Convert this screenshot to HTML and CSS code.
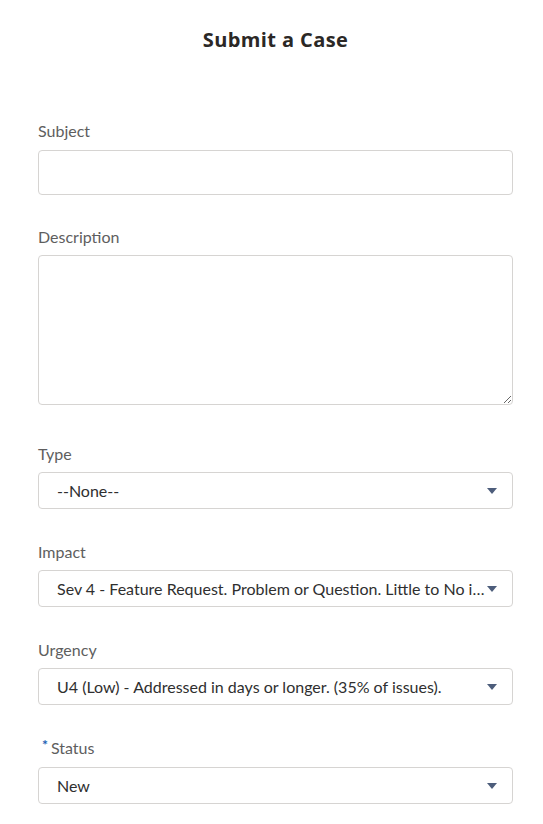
FILE: index.html
```html
<!DOCTYPE html>
<html lang="en">
<head>
<meta charset="utf-8">
<title>Submit a Case</title>
<link rel="stylesheet" href="styles.css">
</head>
<body>
<div class="page">
  <h1 class="title">Submit a Case</h1>
  <form class="form">
    <div class="field">
      <label class="label">Subject</label>
      <input class="input" type="text">
    </div>
    <div class="field field-desc">
      <label class="label">Description</label>
      <textarea class="textarea"></textarea>
    </div>
    <div class="field">
      <label class="label">Type</label>
      <div class="select"><span class="select-text">--None--</span><span class="arrow"></span></div>
    </div>
    <div class="field">
      <label class="label">Impact</label>
      <div class="select"><span class="select-text">Sev 4 - Feature Request. Problem or Question. Little to No impact on business operations.</span><span class="arrow"></span></div>
    </div>
    <div class="field">
      <label class="label">Urgency</label>
      <div class="select"><span class="select-text">U4 (Low) - Addressed in days or longer. (35% of issues).</span><span class="arrow"></span></div>
    </div>
    <div class="field">
      <label class="label label-req"><span class="req">*</span>Status</label>
      <div class="select"><span class="select-text">New</span><span class="arrow"></span></div>
    </div>
  </form>
</div>
</body>
</html>
```
FILE: styles.css
```css
html, body {
  margin: 0;
  padding: 0;
  background: #ffffff;
}
body {
  font-family: Lato, "Open Sans", Arial, sans-serif;
  color: #3e3e3c;
}
.page {
  padding: 0 30px 0 38px;
}
.title {
  margin: 0;
  padding-top: 27px;
  height: 121px;
  box-sizing: border-box;
  text-align: center;
  font-family: "Open Sans", Arial, sans-serif;
  font-weight: 700;
  font-size: 20px;
  line-height: 26px;
  color: #2b2826;
  letter-spacing: 0.4px;
}
.form {
  display: flex;
  flex-direction: column;
  gap: 33px;
}
.field {
  display: flex;
  flex-direction: column;
}
.label {
  font-size: 16px;
  line-height: 20px;
  color: #5e5e5e;
  margin-bottom: 8px;
  display: flex;
  align-items: center;
}
.field:first-child .label {
  margin-bottom: 9px;
}
.label-req {
  margin-bottom: 9px;
}
.req {
  color: #1b5fb4;
  font-size: 14px;
  font-weight: 700;
  margin-right: 3px;
  margin-left: 4px;
  line-height: 1;
  position: relative;
  top: -3px;
}
.input {
  display: block;
  height: 45px;
  box-sizing: border-box;
  border: 1px solid #d6d4d2;
  border-radius: 4px;
  margin: 0;
  padding: 0 12px;
  font: inherit;
}
.textarea {
  display: block;
  height: 150px;
  box-sizing: border-box;
  border: 1px solid #d6d4d2;
  border-radius: 4px;
  margin: 0;
  padding: 8px 12px;
  font: inherit;
  resize: vertical;
}
.field-desc {
  margin-bottom: 6px;
}
.field:first-child {
  margin-bottom: -1px;
}
.select {
  height: 37px;
  box-sizing: border-box;
  border: 1px solid #d6d4d2;
  border-radius: 4px;
  display: flex;
  align-items: center;
  padding: 0 15px 0 18px;
  gap: 2px;
}
.select-text {
  flex: 1;
  min-width: 0;
  white-space: nowrap;
  overflow: hidden;
  text-overflow: ellipsis;
  font-size: 16px;
  color: #2f2f2f;
}
.arrow {
  width: 0;
  height: 0;
  border-left: 5px solid transparent;
  border-right: 5px solid transparent;
  border-top: 6px solid #4d5d7b;
  flex: none;
}
```
